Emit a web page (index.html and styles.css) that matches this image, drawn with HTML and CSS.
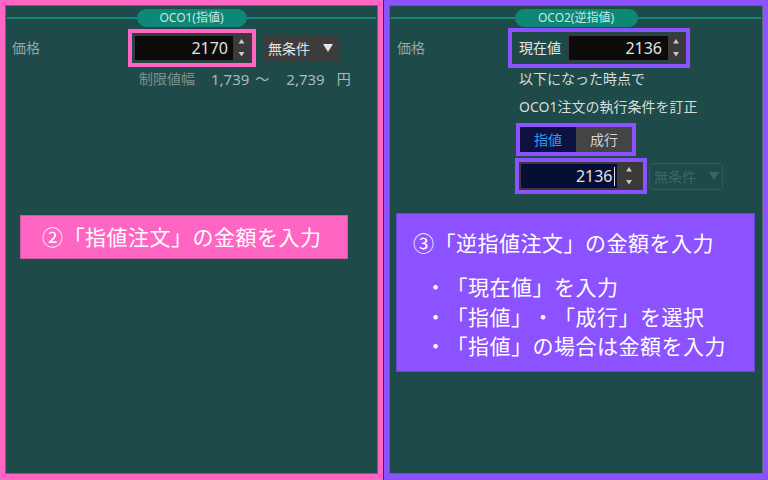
FILE: index.html
```html
<!DOCTYPE html>
<html lang="ja">
<head>
<meta charset="utf-8">
<link rel="stylesheet" href="styles.css">
</head>
<body>
<div class="screen">
  <section class="panel panel-pink">
    <div class="inner">
      <div class="hdr"><span class="hline"></span><span class="pill pill-l">OCO1(指値)</span><span class="hline"></span></div>
      <div class="row row-l">
        <span class="label lbl-l">価格</span>
        <div class="numctl hl-pink">
          <span class="field f-l">2170</span>
          <span class="spin spin-l"><svg width="16" height="24" viewBox="0 0 16 24"><path d="M5.5 7.5 L8.5 3 L11.5 7.5 Z M5.5 16 L8.5 20.5 L11.5 16 Z" fill="#c8c8c8"/></svg></span>
        </div>
        <div class="select">無条件<svg class="caret" width="10" height="8" viewBox="0 0 10 8"><path d="M0 0 L10 0 L5 8 Z" fill="#e4e4e4"/></svg></div>
      </div>
      <div class="limit"><span class="lim-lbl">制限値幅</span><span class="lim-n1">1,739</span><span class="lim-t">～</span><span class="lim-n2">2,739</span><span class="lim-y">円</span></div>
      <div class="callout callout-pink">②「指値注文」の金額を入力</div>
    </div>
  </section>
  <section class="panel panel-purple">
    <div class="inner">
      <div class="hdr"><span class="hline"></span><span class="pill pill-r">OCO2(逆指値)</span><span class="hline"></span></div>
      <div class="row row-r">
        <span class="label lbl-r">価格</span>
        <div class="cur hl-purple">
          <span class="cur-lbl">現在値</span>
          <div class="numctl">
            <span class="field f-r">2136</span>
            <span class="spin spin-r"><svg width="16" height="24" viewBox="0 0 16 24"><path d="M5 7.5 L8 3 L11 7.5 Z M5 16 L8 20.5 L11 16 Z" fill="#c8c8c8"/></svg></span>
          </div>
        </div>
      </div>
      <div class="note note1">以下になった時点で</div>
      <div class="note note2">OCO1注文の執行条件を訂正</div>
      <div class="seg hl-purple"><span class="seg-on">指値</span><span class="seg-off">成行</span></div>
      <div class="row row-r2">
        <div class="numctl hl-purple">
          <span class="field f-r2">2136<span class="cursor"></span></span>
          <span class="spin spin-r2"><svg width="24" height="24" viewBox="0 0 24 24"><path d="M9 7.5 L12 3 L15 7.5 Z M9 16 L12 20.5 L15 16 Z" fill="#c8c8c8"/></svg></span>
        </div>
        <div class="select select-off">無条件<svg class="caret" width="10" height="8" viewBox="0 0 10 8"><path d="M0 0 L10 0 L5 8 Z" fill="#3f6464"/></svg></div>
      </div>
      <div class="callout callout-purple">
        <div class="c-title">③「逆指値注文」の金額を入力</div>
        <div class="c-list">
          <div class="c-item">・「現在値」を入力</div>
          <div class="c-item">・「指値」・「成行」を選択</div>
          <div class="c-item">・「指値」の場合は金額を入力</div>
        </div>
      </div>
    </div>
  </section>
</div>
</body>
</html>
```
FILE: styles.css
```css
body {
  margin: 0;
  background: #2a3838;
  font-family: "Noto Sans", "Noto Sans CJK JP", sans-serif;
  text-spacing-trim: space-all;
}
.screen {
  display: flex;
  gap: 1px;
  width: 768px;
  height: 480px;
}
.panel {
  box-sizing: border-box;
  height: 480px;
  border: 5px solid;
  border-bottom-width: 6px;
  background: #1f4a4a;
}
.panel-pink { width: 383px; border-color: #ff66c4; }
.panel-purple { width: 384px; border-color: #8c52ff; }
.inner {
  box-sizing: border-box;
  height: 100%;
  border: 1px solid #56706c;
}
.hdr {
  height: 24px;
  display: flex;
  align-items: center;
  padding: 0 1px;
}
.hline {
  flex: 1;
  height: 2px;
  background: #0f8a7a;
}
.pill {
  height: 18px;
  border-radius: 9px;
  background: #0e8777;
  color: #c8e8e2;
  font-size: 12px;
  line-height: 18px;
  text-align: center;
}
.pill-l { width: 110px; }
.pill-r { width: 123px; }

.row {
  display: flex;
  align-items: center;
}
.row-l { margin-top: 4px; height: 28px; padding-left: 6px; }
.label {
  font-size: 14px;
  color: #93a6a6;
  line-height: 20px;
}
.lbl-l { width: 121px; }
.lbl-r { width: 115px; }

.numctl {
  display: flex;
  box-sizing: border-box;
  height: 28px;
  padding: 2px;
  background: #3a3a3a;
}
.field {
  box-sizing: border-box;
  height: 24px;
  background: #0b0b0b;
  color: #e2e2e2;
  font-size: 16px;
  line-height: 24px;
  text-align: right;
  padding-right: 5px;
}
.f-l { width: 98px; }
.f-r { width: 99px; padding-right: 6px; }
.f-r2 {
  width: 96px;
  background: #070e36;
  padding-right: 2px;
  display: flex;
  align-items: center;
  justify-content: flex-end;
}
.cursor {
  width: 1.5px;
  height: 19px;
  background: #e0e0e0;
  margin-left: 1px;
}
.spin { display: flex; }
.spin-l { width: 16px; }
.spin-r { width: 16px; }
.spin-r2 { width: 24px; }

.hl-pink { outline: 4px solid #ff66c4; outline-offset: 1px; }
.hl-purple { outline: 4px solid #8c52ff; outline-offset: 0; }

.select {
  box-sizing: border-box;
  margin-left: 12px;
  width: 76px;
  height: 27px;
  background: #3c3c3c;
  border-radius: 2px;
  padding-left: 5px;
  font-size: 14px;
  line-height: 27px;
  color: #e2e2e2;
  display: flex;
  align-items: center;
}
.caret { margin-left: 13px; }
.select-off {
  margin-left: 6px;
  width: 74px;
  background: transparent;
  border: 1px solid #36595a;
  border-radius: 3px;
  color: #3f6464;
  padding-left: 4px;
}

.limit {
  margin-top: 7px;
  height: 20px;
  line-height: 20px;
  padding-left: 133px;
  font-size: 14px;
  display: flex;
}
.lim-lbl { color: #7a9393; }
.lim-n1 { color: #a9baba; margin-left: 16px; font-size: 15px; }
.lim-t { color: #a9baba; margin-left: 6px; }
.lim-n2 { color: #a9baba; margin-left: 17px; font-size: 15px; }
.lim-y { color: #a9baba; margin-left: 12px; }

.callout {
  box-sizing: border-box;
  color: #ffffff;
  font-size: 21px;
  letter-spacing: 0.5px;
}
.callout-pink {
  margin-top: 126px;
  margin-left: 14px;
  width: 328px;
  height: 44px;
  background: #ff66c4;
  border: 1px solid #cf5aa3;
  line-height: 42px;
  padding-left: 21px;
}

.row-r { margin-top: 2px; padding-left: 7px; }
.cur {
  display: flex;
  align-items: center;
  padding: 2px 0 2px 7px;
  width: 174px;
  box-sizing: border-box;
}
.cur-lbl {
  font-size: 14px;
  color: #e6e6e6;
  margin-right: 6px;
  line-height: 20px;
}
.note {
  margin-left: 129px;
  height: 20px;
  line-height: 20px;
  font-size: 14px;
  color: #d6dddd;
}
.note1 { margin-top: 5px; }
.note2 { margin-top: 8px; }

.seg {
  margin-top: 10px;
  margin-left: 130px;
  width: 112px;
  height: 25px;
  display: flex;
  font-size: 14px;
  line-height: 25px;
}
.seg-on {
  width: 56px;
  background: #0b1240;
  color: #2e9cf2;
  text-align: center;
}
.seg-off {
  width: 56px;
  background: #444444;
  color: #d2d2d2;
  text-align: center;
}
.row-r2 { margin-top: 10px; padding-left: 129px; height: 28px; }

.callout-purple {
  margin-top: 23px;
  margin-left: 6px;
  width: 359px;
  height: 159px;
  background: #8c52ff;
  border: 1px solid #6a48c8;
  padding-top: 14px;
}
.c-title {
  line-height: 30px;
  padding-left: 16px;
}
.c-list {
  margin-top: 15px;
  padding-left: 28px;
}
.c-item { line-height: 29.5px; }
```
